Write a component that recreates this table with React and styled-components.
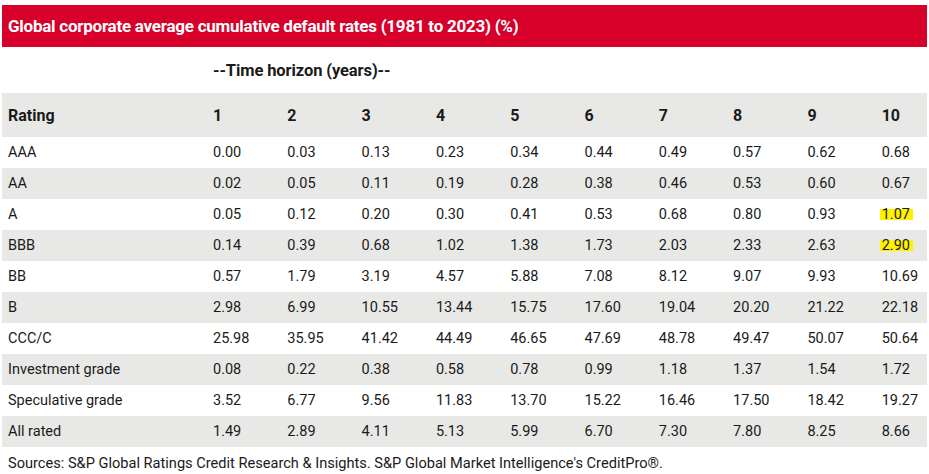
import React from "react";
import styled, { createGlobalStyle } from "styled-components";

const Global = createGlobalStyle`
  body {
    margin: 0;
    background: #fff;
    font-family: Roboto, "Liberation Sans", sans-serif;
    color: #1a1a1a;
  }
`;

const Page = styled.div`
  width: 929px;
  padding: 5px 2px 0 2px;
  box-sizing: border-box;
`;

const TitleBar = styled.div`
  height: 42px;
  background: #d6002a;
  color: #fff;
  font-weight: 700;
  font-size: 17px;
  letter-spacing: -0.25px;
  display: flex;
  align-items: center;
  padding-left: 6px;
`;

const Row = styled.div`
  display: grid;
  grid-template-columns: 205px repeat(9, 74.3px) 1fr;
  align-items: center;
  height: ${(p) => p.$h || 31}px;
  background: ${(p) => (p.$shade ? "#e8e9e7" : "#fff")};
  font-size: ${(p) => (p.$bold ? 16 : 14.5)}px;
  font-weight: ${(p) => (p.$bold ? 700 : 400)};
  padding-left: 6px;
`;

const Cell = styled.div`
  white-space: nowrap;
`;

const Horizon = styled.div`
  grid-column: 2 / span 5;
  font-weight: 700;
  font-size: 16.5px;
  letter-spacing: -0.1px;
`;

const Mark = styled.span`
  background: #fff200;
  display: inline-block;
  line-height: 11px;
  height: 11px;
  padding: 0 3px 0 2px;
  margin-left: -2px;
`;

const Source = styled.div`
  font-size: 14.6px;
  padding: 7px 0 0 6px;
`;

const rows = [
  ["AAA", "0.00", "0.03", "0.13", "0.23", "0.34", "0.44", "0.49", "0.57", "0.62", "0.68"],
  ["AA", "0.02", "0.05", "0.11", "0.19", "0.28", "0.38", "0.46", "0.53", "0.60", "0.67"],
  ["A", "0.05", "0.12", "0.20", "0.30", "0.41", "0.53", "0.68", "0.80", "0.93", "1.07"],
  ["BBB", "0.14", "0.39", "0.68", "1.02", "1.38", "1.73", "2.03", "2.33", "2.63", "2.90"],
  ["BB", "0.57", "1.79", "3.19", "4.57", "5.88", "7.08", "8.12", "9.07", "9.93", "10.69"],
  ["B", "2.98", "6.99", "10.55", "13.44", "15.75", "17.60", "19.04", "20.20", "21.22", "22.18"],
  ["CCC/C", "25.98", "35.95", "41.42", "44.49", "46.65", "47.69", "48.78", "49.47", "50.07", "50.64"],
  ["Investment grade", "0.08", "0.22", "0.38", "0.58", "0.78", "0.99", "1.18", "1.37", "1.54", "1.72"],
  ["Speculative grade", "3.52", "6.77", "9.56", "11.83", "13.70", "15.22", "16.46", "17.50", "18.42", "19.27"],
  ["All rated", "1.49", "2.89", "4.11", "5.13", "5.99", "6.70", "7.30", "7.80", "8.25", "8.66"],
];

const highlighted = ["A", "BBB"];

export default function App() {
  return (
    <Page>
      <Global />
      <TitleBar>Global corporate average cumulative default rates (1981 to 2023) (%)</TitleBar>
      <Row $h={46}>
        <Horizon>--Time horizon (years)--</Horizon>
      </Row>
      <Row $h={44} $shade $bold>
        <Cell>Rating</Cell>
        {[1, 2, 3, 4, 5, 6, 7, 8, 9, 10].map((n) => (
          <Cell key={n}>{n}</Cell>
        ))}
      </Row>
      {rows.map((r, i) => (
        <Row key={r[0]} $shade={i % 2 === 1}>
          {r.map((v, j) => (
            <Cell key={j}>
              {j === 10 && highlighted.includes(r[0]) ? <Mark>{v}</Mark> : v}
            </Cell>
          ))}
        </Row>
      ))}
      <Source>
        Sources: S&amp;P Global Ratings Credit Research &amp; Insights. S&amp;P Global Market Intelligence's CreditPro®.
      </Source>
    </Page>
  );
}
